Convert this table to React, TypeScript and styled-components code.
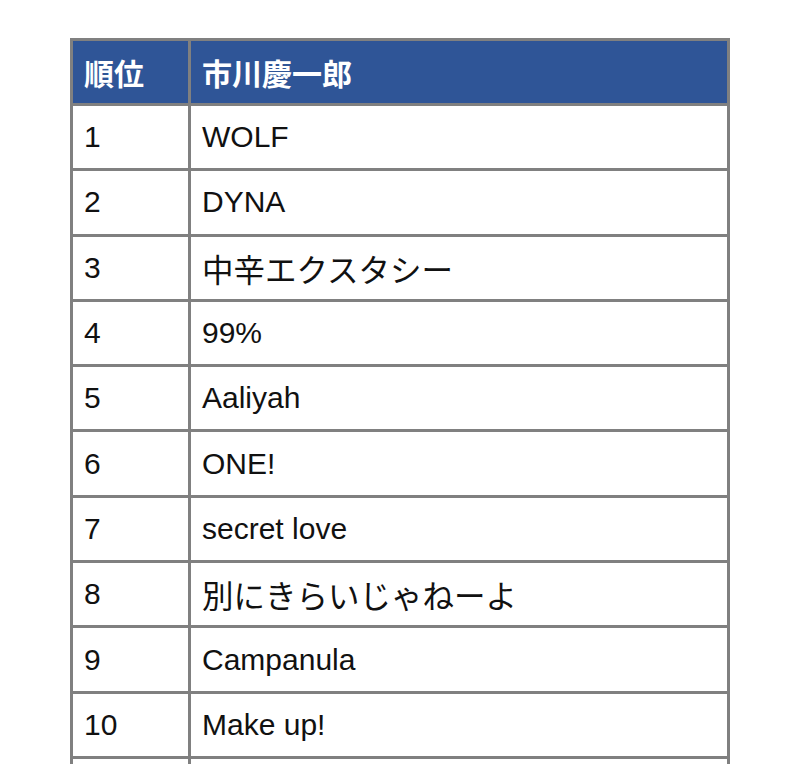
import React from 'react'
import styled, { createGlobalStyle } from 'styled-components'

const songs = [
  'WOLF',
  'DYNA',
  '中辛エクスタシー',
  '99%',
  'Aaliyah',
  'ONE!',
  'secret love',
  '別にきらいじゃねーよ',
  'Campanula',
  'Make up!',
]

const isJapanese = (s: string) => /[\u3040-\u30ff\u4e00-\u9fff]/.test(s)

const GlobalStyle = createGlobalStyle`
  body {
    margin: 0;
    background: #fff;
    font-family: "Liberation Sans", "Noto Sans CJK JP", sans-serif;
  }
`

export default function App() {
  return (
    <>
      <GlobalStyle />
      <Page>
        <RankTable>
          <thead>
            <tr>
              <HeadCell $rank>順位</HeadCell>
              <HeadCell>市川慶一郎</HeadCell>
            </tr>
          </thead>
          <tbody>
            {songs.map((title, i) => (
              <Row key={title}>
                <Cell $rank>{i + 1}</Cell>
                <Cell>
                  <Title $jp={isJapanese(title)}>{title}</Title>
                </Cell>
              </Row>
            ))}
            <Row>
              <Cell $rank />
              <Cell />
            </Row>
          </tbody>
        </RankTable>
      </Page>
    </>
  )
}

const Page = styled.div`
  padding: 38px 0 0 70px;
  height: 764px;
  overflow: hidden;
  box-sizing: border-box;
`

const RankTable = styled.table`
  width: 660px;
  border-collapse: collapse;
  border: 3px solid #808080;
  font-size: 30px;
  color: #111;
`

const HeadCell = styled.th<{ $rank?: boolean }>`
  width: ${p => (p.$rank ? '118px' : 'auto')};
  height: 65px;
  padding: 0 11px;
  background: #2f5597;
  color: #fff;
  font-weight: bold;
  text-align: left;
  border: 3px solid #808080;
  box-sizing: border-box;
`

const Row = styled.tr`
  height: 65.3px;
`

const Cell = styled.td<{ $rank?: boolean }>`
  width: ${p => (p.$rank ? '118px' : 'auto')};
  padding: 0 11px;
  border: 3px solid #808080;
  vertical-align: middle;
  box-sizing: border-box;
`

const Title = styled.span<{ $jp?: boolean }>`
  font-size: ${p => (p.$jp ? '31.5px' : '30px')};
`
